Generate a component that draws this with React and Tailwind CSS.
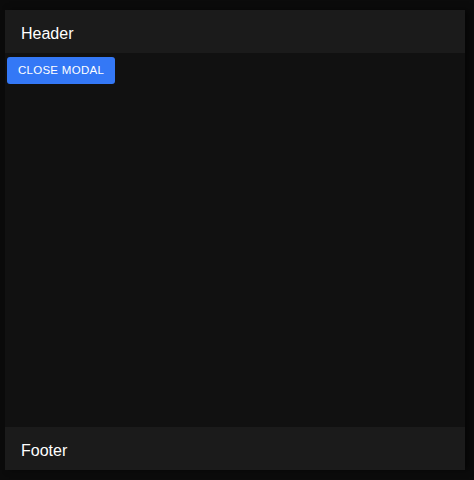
export default function App() {
  return (
    <div className="h-[480px] w-[474px] bg-[#0b0b0b] pt-[10px] pl-[5px] font-['Liberation_Sans',Arial,sans-serif]">
      <div className="flex h-[460px] w-[460px] flex-col bg-[#111111] shadow-[4px_0_6px_rgba(0,0,0,0.5)]">
        {/* Header */}
        <div className="flex h-[43px] items-center bg-[#1b1b1b] px-[16px] pt-[4px] text-[16px] text-white">
          Header
        </div>
        {/* Body */}
        <div className="flex-1 px-[2px] pt-[4px]">
          <button className="h-[27px] w-[108px] rounded-[3px] bg-[#3478f6] pt-[1px] text-[11.5px] font-medium tracking-[0.025em] text-white">
            CLOSE MODAL
          </button>
        </div>
        {/* Footer */}
        <div className="flex h-[43px] items-center bg-[#1b1b1b] px-[16px] pt-[4px] text-[16px] text-white">
          Footer
        </div>
      </div>
    </div>
  );
}
